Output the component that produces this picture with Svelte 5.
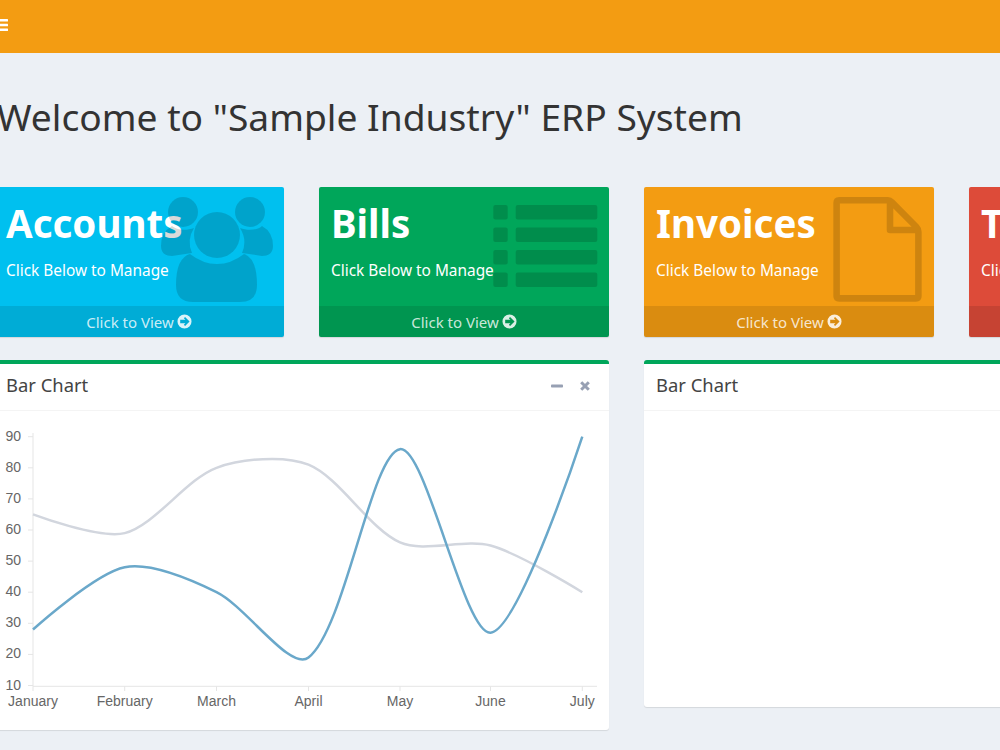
<script lang="ts">
  const cards = [
    { title: 'Accounts', color: '#00c0ef', icon: 'users' },
    { title: 'Bills', color: '#00a65a', icon: 'list' },
    { title: 'Invoices', color: '#f39c12', icon: 'file' },
    { title: 'Tasks', color: '#dd4b39', icon: '' }
  ];

  const months = ['January', 'February', 'March', 'April', 'May', 'June', 'July'];
  const xs = [33, 124.7, 216.5, 308.5, 400, 490.5, 582.3];
  const ticks = [90, 80, 70, 60, 50, 40, 30, 20, 10];
  const yOf = (v: number) => 685.5 - (v - 10) * 3.11;

  // same spline the old Chart.js line charts use
  function spline(values: number[]) {
    const pts = values.map((v, i) => [xs[i], yOf(v)]);
    const t = 0.3;
    const ctrl = pts.map((p, i) => {
      if (i === 0 || i === pts.length - 1) return { a: p, b: p };
      const prev = pts[i - 1];
      const next = pts[i + 1];
      const d1 = Math.hypot(p[0] - prev[0], p[1] - prev[1]);
      const d2 = Math.hypot(next[0] - p[0], next[1] - p[1]);
      const fa = (t * d1) / (d1 + d2);
      const fb = (t * d2) / (d1 + d2);
      return {
        a: [p[0] - fa * (next[0] - prev[0]), p[1] - fa * (next[1] - prev[1])],
        b: [p[0] + fb * (next[0] - prev[0]), p[1] + fb * (next[1] - prev[1])]
      };
    });
    let d = `M${pts[0][0]} ${pts[0][1]}`;
    for (let i = 1; i < pts.length; i++) {
      d += ` C${ctrl[i - 1].b[0]} ${ctrl[i - 1].b[1]} ${ctrl[i].a[0]} ${ctrl[i].a[1]} ${pts[i][0]} ${pts[i][1]}`;
    }
    return d;
  }

  const gray = spline([65, 59, 80, 81, 56, 55, 40]);
  const blue = spline([28, 48, 40, 19, 86, 27, 90]);
</script>

<div class="page">
  <header class="topbar">
    <svg class="burger" viewBox="0 0 8 12" width="8" height="12" aria-hidden="true">
      <rect x="-1" y="0" width="9" height="2.6" rx="0.5" />
      <rect x="-1" y="4.7" width="9" height="2.6" rx="0.5" />
      <rect x="-1" y="9.4" width="9" height="2.6" rx="0.5" />
    </svg>
  </header>

  <main class="content">
    <h1>Welcome to "Sample Industry" ERP System</h1>

    <div class="cards">
      {#each cards as card}
        <div class="card" style="background:{card.color}">
          <div class="inner">
            <h3>{card.title}</h3>
            <p>Click Below to Manage</p>
          </div>
          {#if card.icon === 'users'}
            <svg class="icon" viewBox="0 0 290 150" aria-hidden="true">
              <g transform="translate(6 -187)">
                <circle cx="183" cy="212" r="15" />
                <circle cx="250" cy="212" r="15" />
                <circle cx="217" cy="235" r="23" />
                <path d="M172 226 C176 230 186 231 194 228 A27 27 0 0 0 192 253 L172 256 Q161 256 161 246 Q161 232 172 226Z" />
                <path d="M262 226 C258 230 248 231 240 228 A27 27 0 0 1 242 253 L262 256 Q273 256 273 246 Q273 232 262 226Z" />
                <path d="M190 254 Q203 264 217 264 Q231 264 244 254 Q257 258 257 285 Q257 302 240 302 H193 Q176 302 176 285 Q176 258 190 254Z" />
              </g>
            </svg>
          {:else if card.icon === 'list'}
            <svg class="icon" viewBox="0 0 290 150" aria-hidden="true">
              <g transform="translate(-319 -187)">
                {#each [205, 227.5, 250, 272.5] as y}
                  <rect x="493.3" {y} width="14.4" height="14.5" rx="2" />
                  <rect x="515.7" {y} width="81.6" height="14.5" rx="2" />
                {/each}
              </g>
            </svg>
          {:else if card.icon === 'file'}
            <svg class="icon" viewBox="0 0 290 150" aria-hidden="true">
              <g transform="translate(-644 -187)">
                <path class="outline" d="M836.6 203 Q836.6 200.3 839 200.3 H888 Q890 200.3 892 202.3 L916.4 227 Q918.4 229 918.4 232 V296 Q918.4 298.4 916 298.4 H839 Q836.6 298.4 836.6 296Z M890 202 V230 H917" />
              </g>
            </svg>
          {/if}
          <a class="more" href="#top">
            Click to View
            <svg viewBox="0 0 16 16" width="15" height="15" aria-hidden="true">
              <path fill-rule="evenodd" d="M8 .5a7.5 7.5 0 1 1 0 15 7.5 7.5 0 0 1 0-15Zm.6 2.7L7.3 4.5 9 6.2H3.4v3.6H9l-1.7 1.7 1.3 1.3L13.4 8Z" />
            </svg>
          </a>
        </div>
      {/each}
    </div>

    <div class="panels">
      <section class="panel">
        <div class="panel-head">
          <h4>Bar Chart</h4>
          <div class="tools">
            <svg viewBox="0 0 12 12" width="12" height="12" aria-hidden="true"><rect y="4.6" width="12" height="3" rx="0.8" /></svg>
            <svg viewBox="0 0 12 12" width="12" height="12" aria-hidden="true"><path class="cross" d="M2.2 2.2 L9.8 9.8 M9.8 2.2 L2.2 9.8" /></svg>
          </div>
        </div>
        <svg class="chart" viewBox="-6 411 615 319" width="615" height="319" role="img" aria-label="Line chart">
          <g class="axis">
            <path d="M33 433 V686.3 H597" />
            {#each ticks as t}
              <path d="M28 {yOf(t)} H33" />
            {/each}
            {#each xs as x}
              <path d="M{x} 686.3 V691" />
            {/each}
          </g>
          <g class="labels">
            {#each ticks as t}
              <text x="21" y={yOf(t) + 4} text-anchor="end">{t}</text>
            {/each}
            {#each months as m, i}
              <text x={xs[i]} y="706" text-anchor="middle">{m}</text>
            {/each}
          </g>
          <path class="line gray" d={gray} />
          <path class="line blue" d={blue} />
        </svg>
      </section>

      <section class="panel second">
        <div class="panel-head">
          <h4>Bar Chart</h4>
        </div>
      </section>
    </div>
  </main>
</div>

<style>
  :global(html), :global(body) {
    margin: 0;
    height: 750px;
    overflow: hidden;
    background: #ecf0f5;
  }

  .page {
    width: 1000px;
    height: 750px;
    overflow: hidden;
    font-family: "Noto Sans", "Open Sans", sans-serif;
    color: #333;
    background: #ecf0f5;
  }

  .topbar {
    height: 53px;
    background: #f39c12;
    display: flex;
    align-items: center;
  }

  .burger {
    fill: #fff;
    overflow: visible;
    margin-top: -3px;
  }

  .content {
    margin-left: -6px;
    width: 1300px;
  }

  h1 {
    margin: 0;
    padding: 39px 0 0 3px;
    height: 94px;
    box-sizing: border-box;
    font-size: 37.2px;
    line-height: 50px;
    font-weight: 400;
    white-space: nowrap;
  }

  .cards {
    display: flex;
    gap: 35px;
    margin-top: 40px;
  }

  .card {
    position: relative;
    width: 290px;
    height: 150px;
    border-radius: 2px;
    box-shadow: 0 1px 1px rgba(0, 0, 0, 0.1);
    color: #fff;
    display: flex;
    flex-direction: column;
    overflow: hidden;
  }

  .inner {
    flex: 1;
    padding: 10px 12px;
  }

  .inner h3 {
    margin: 0;
    font-size: 38.5px;
    line-height: 52px;
    font-weight: 700;
  }

  .inner p {
    margin: 10px 0 0;
    font-size: 15.4px;
    line-height: 24px;
  }

  .icon {
    position: absolute;
    inset: 0;
    width: 290px;
    height: 150px;
    fill: rgba(0, 0, 0, 0.15);
  }

  .outline {
    fill: none;
    stroke: rgba(0, 0, 0, 0.15);
    stroke-width: 6.6;
    stroke-linejoin: round;
  }

  .more {
    height: 31px;
    display: flex;
    align-items: center;
    justify-content: center;
    gap: 3px;
    background: rgba(0, 0, 0, 0.1);
    color: rgba(255, 255, 255, 0.8);
    font-size: 15px;
    text-decoration: none;
  }

  .more svg {
    fill: rgba(255, 255, 255, 0.85);
  }

  .panels {
    display: flex;
    align-items: flex-start;
    gap: 35px;
    margin-top: 23px;
  }

  .panel {
    width: 615px;
    height: 370px;
    box-sizing: border-box;
    background: #fff;
    border-top: 4px solid #00a65a;
    border-radius: 3px;
    box-shadow: 0 1px 1px rgba(0, 0, 0, 0.1);
  }

  .panel.second {
    height: 347px;
  }

  .panel-head {
    height: 47px;
    box-sizing: border-box;
    padding: 0 18px 6px 12px;
    display: flex;
    align-items: center;
    justify-content: space-between;
    border-bottom: 1px solid #f4f4f4;
  }

  .panel-head h4 {
    margin: 0;
    font-size: 18.4px;
    font-weight: 400;
    color: #444;
  }

  .tools {
    display: flex;
    gap: 16px;
    margin-top: 4px;
  }

  .tools svg {
    fill: #97a0b3;
  }

  .cross {
    fill: none;
    stroke: #97a0b3;
    stroke-width: 3;
  }

  .chart {
    display: block;
  }

  .axis path {
    fill: none;
    stroke: #e5e5e5;
    stroke-width: 1;
  }

  .labels text {
    font-family: "Liberation Sans", Arial, sans-serif;
    font-size: 14px;
    fill: #666;
  }

  .line {
    fill: none;
    stroke-width: 2.5;
  }

  .gray {
    stroke: #d2d6de;
  }

  .blue {
    stroke: #6aa8ca;
  }
</style>
